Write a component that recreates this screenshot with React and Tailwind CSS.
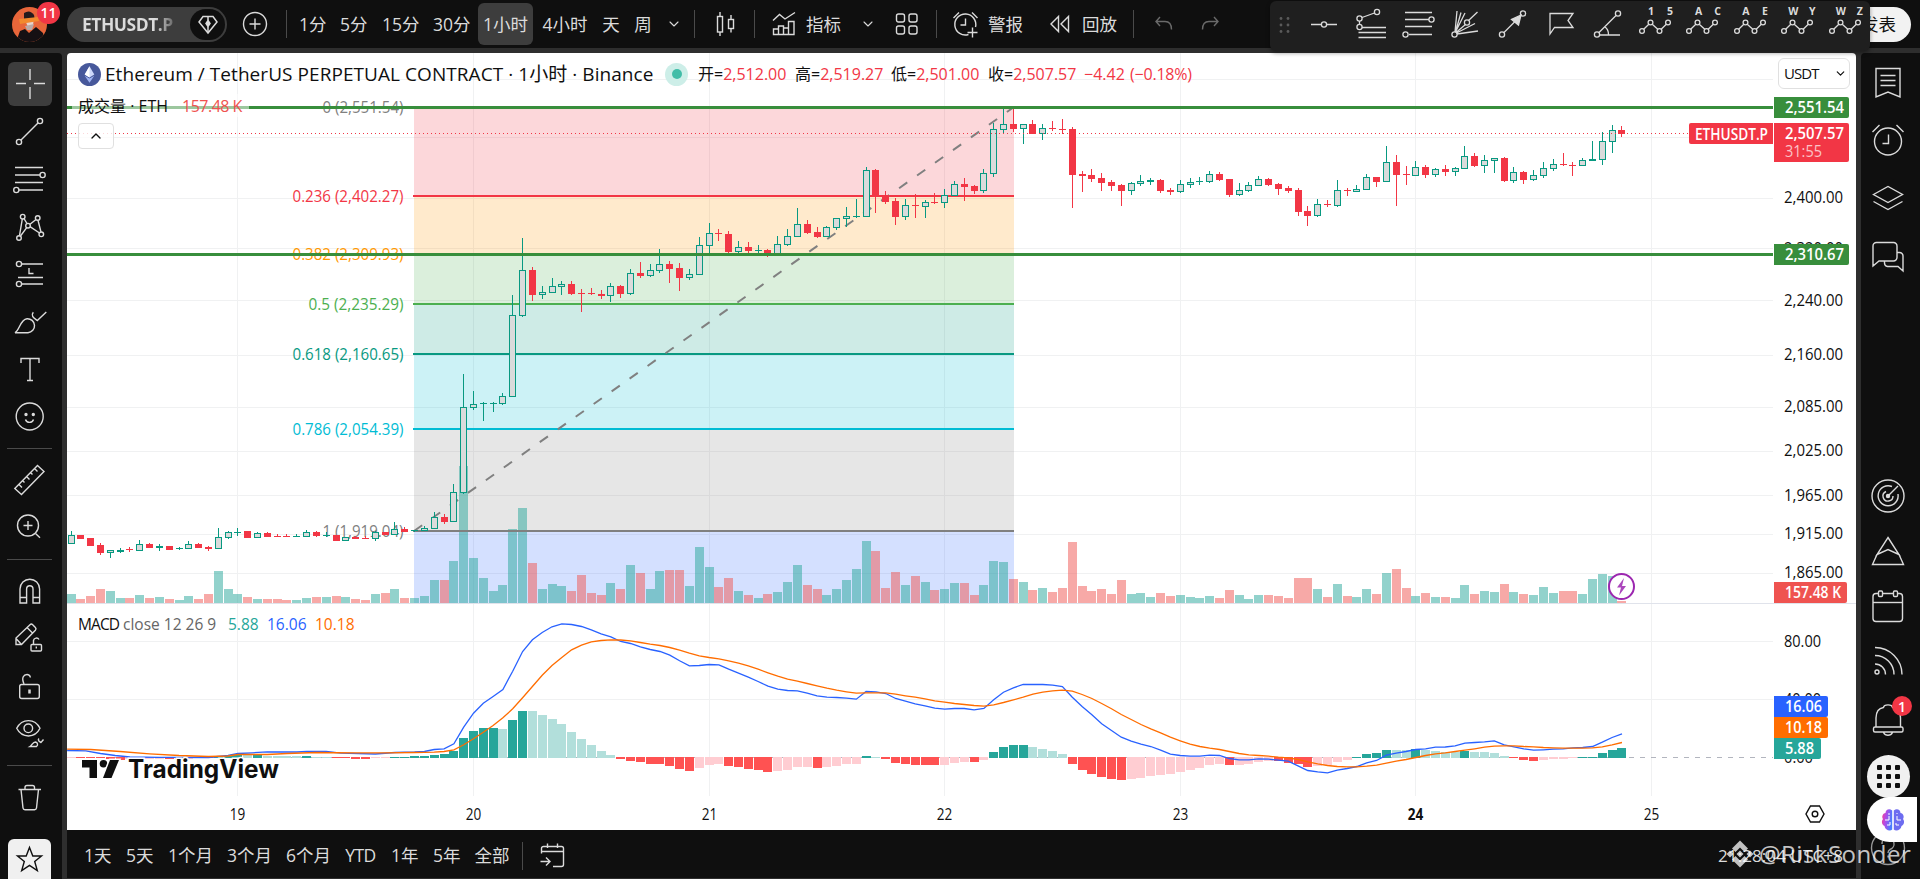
import { ChevronDown, ChevronUp } from 'lucide-react';

// one row per hour: [up, high, bodyTop, bodyBottom, low, volume]
const BARS = [
  [1, 531, 535, 544, 544, 9], [0, 535, 535, 539, 539, 4], [0, 538, 538, 546, 546, 7], [0, 543, 545, 553, 555, 14],
  [1, 550, 550, 553, 558, 12], [1, 548, 550, 552, 553, 5], [0, 547, 549, 550, 552, 5], [1, 540, 544, 551, 551, 8],
  [0, 543, 544, 548, 548, 5], [1, 544, 546, 548, 551, 6], [0, 546, 546, 550, 550, 4], [1, 547, 548, 549, 550, 3],
  [1, 541, 544, 549, 549, 7], [0, 543, 544, 548, 548, 4], [0, 546, 547, 549, 551, 9], [1, 528, 537, 549, 549, 32],
  [1, 531, 532, 538, 539, 14], [1, 528, 532, 533, 536, 9], [0, 531, 531, 538, 538, 6], [1, 532, 533, 538, 538, 4],
  [0, 532, 533, 537, 537, 4], [0, 534, 536, 537, 537, 4], [0, 534, 536, 537, 537, 3], [1, 534, 536, 537, 537, 3],
  [1, 530, 532, 537, 537, 5], [0, 531, 532, 536, 537, 6], [1, 532, 535, 536, 537, 6], [0, 535, 535, 541, 541, 7],
  [1, 537, 537, 541, 541, 6], [0, 536, 537, 539, 539, 4], [0, 536, 538, 539, 539, 3], [1, 531, 532, 539, 541, 9],
  [0, 532, 532, 535, 535, 10], [1, 522, 529, 535, 535, 14], [0, 527, 529, 532, 532, 5], [1, 530, 530, 531, 532, 5],
  [1, 526, 528, 531, 531, 7], [1, 512, 517, 529, 529, 23], [0, 514, 517, 522, 524, 23], [1, 484, 492, 522, 522, 42],
  [1, 374, 407, 493, 494, 137], [1, 391, 404, 408, 410, 45], [1, 402, 403, 404, 421, 25], [1, 402, 403, 404, 412, 12],
  [1, 393, 396, 404, 405, 18], [1, 295, 315, 397, 397, 74], [1, 238, 270, 316, 317, 95], [0, 267, 270, 295, 301, 40],
  [1, 286, 292, 295, 299, 14], [1, 278, 286, 293, 293, 19], [1, 281, 284, 287, 295, 17], [0, 281, 284, 294, 295, 12],
  [0, 289, 293, 294, 312, 28], [0, 288, 293, 294, 295, 10], [0, 290, 294, 296, 299, 8], [1, 283, 286, 296, 302, 20],
  [0, 285, 286, 294, 298, 14], [1, 269, 273, 294, 295, 38], [0, 262, 273, 276, 278, 30], [1, 264, 270, 276, 277, 14],
  [1, 249, 264, 271, 273, 32], [0, 261, 264, 269, 283, 33], [0, 263, 268, 278, 291, 33], [1, 269, 274, 278, 280, 17],
  [1, 237, 245, 275, 275, 56], [1, 223, 233, 246, 254, 36], [0, 229, 233, 234, 241, 16], [0, 231, 234, 252, 255, 25],
  [1, 241, 247, 252, 253, 12], [0, 242, 247, 251, 253, 8], [1, 245, 250, 251, 253, 5], [0, 249, 250, 254, 257, 9],
  [1, 236, 244, 254, 254, 11], [1, 229, 236, 245, 246, 21], [1, 208, 224, 237, 237, 38], [0, 220, 224, 233, 234, 18],
  [0, 227, 232, 237, 238, 14], [1, 226, 227, 237, 237, 8], [1, 218, 218, 228, 230, 14], [1, 207, 216, 219, 227, 23],
  [1, 199, 216, 217, 218, 34], [1, 167, 170, 217, 217, 62], [0, 169, 170, 196, 213, 52], [0, 191, 195, 202, 204, 15],
  [0, 198, 201, 217, 225, 31], [1, 199, 205, 217, 220, 18], [0, 194, 205, 206, 218, 27], [1, 200, 202, 207, 218, 21],
  [0, 193, 202, 203, 204, 13], [1, 189, 195, 203, 208, 14], [1, 181, 184, 196, 196, 20], [0, 178, 184, 187, 201, 20],
  [0, 185, 186, 191, 194, 8], [1, 169, 173, 191, 193, 18], [1, 123, 129, 174, 177, 42], [1, 109, 124, 130, 133, 41],
  [0, 109, 124, 129, 132, 24], [1, 124, 124, 129, 144, 21], [0, 120, 124, 134, 134, 13], [1, 124, 128, 134, 140, 15],
  [0, 121, 128, 129, 131, 11], [0, 119, 129, 130, 134, 15], [0, 127, 129, 175, 208, 61], [0, 171, 174, 176, 192, 17],
  [0, 169, 175, 179, 182, 12], [0, 173, 178, 183, 191, 14], [0, 180, 182, 186, 191, 9], [0, 184, 185, 191, 206, 23],
  [1, 182, 183, 191, 195, 9], [1, 175, 181, 184, 186, 10], [1, 178, 180, 182, 185, 6], [0, 179, 180, 191, 193, 10],
  [0, 188, 190, 192, 195, 7], [1, 180, 184, 192, 193, 8], [1, 178, 182, 185, 188, 6], [1, 177, 181, 182, 185, 5],
  [1, 171, 174, 182, 183, 7], [0, 172, 174, 180, 181, 5], [0, 179, 179, 195, 197, 13], [1, 183, 190, 195, 196, 8],
  [1, 182, 185, 191, 192, 4], [1, 176, 179, 186, 186, 8], [0, 178, 179, 185, 186, 8], [0, 183, 184, 189, 195, 7],
  [0, 186, 188, 191, 193, 5], [0, 188, 190, 212, 216, 25], [0, 206, 211, 216, 226, 25], [1, 199, 204, 216, 217, 14],
  [0, 200, 204, 205, 207, 6], [1, 180, 190, 206, 207, 19], [0, 188, 190, 191, 196, 7], [1, 185, 189, 192, 192, 6],
  [1, 174, 177, 190, 190, 14], [0, 177, 177, 182, 187, 9], [1, 146, 162, 182, 182, 30], [0, 155, 162, 175, 206, 34],
  [0, 166, 174, 175, 185, 15], [1, 161, 167, 176, 176, 7], [0, 165, 167, 175, 178, 10], [1, 168, 169, 175, 177, 6],
  [0, 165, 169, 172, 176, 6], [1, 167, 168, 172, 176, 5], [1, 146, 156, 169, 169, 18], [0, 153, 156, 166, 167, 9],
  [1, 155, 160, 166, 173, 12], [1, 158, 158, 161, 173, 11], [0, 157, 158, 181, 182, 19], [1, 167, 172, 181, 183, 11],
  [0, 171, 172, 180, 184, 9], [1, 170, 175, 180, 181, 8], [1, 162, 168, 176, 178, 16], [1, 159, 164, 169, 171, 10],
  [0, 153, 164, 165, 166, 12], [0, 162, 165, 166, 176, 12], [1, 158, 160, 166, 166, 9], [1, 141, 159, 161, 161, 24],
  [1, 132, 141, 160, 165, 29], [1, 125, 130, 142, 153, 27], [0, 126, 130, 134, 137, 2],
];

const HIST = [
  -0.3, -0.6, -1, -1.3, -1.6, -2.5, -2.3, -2.2, -2, -1.8, -2, -1.8, -1.5, -1, -1.2, 1.5, 2,
  3, 2.8, 3, 2.4, 2.2, 1.8, 1.7, 1.8, 1.4, 0.8, -0.6, -1.4, -1.5, -1.6, -0.6, -0.4, 0.7,
  1.4, 1.5, 1.6, 2.6, 4, 7, 20, 27, 29.9, 30, 29, 38, 47, 46.9, 43, 39, 34, 26, 19, 13, 7, 3,
  -1.5, -4, -5, -6.7, -6.8, -9, -12, -14, -11, -8, -7, -9, -10, -12, -13, -15, -14, -13, -10, -9.9, -11, -10, -9, -7, -6.9,
  1.5, 1, -1.5, -6, -7, -8, -8.1, -8.2, -8, -6, -5, -5.1, -2.5, 5.5, 10.5, 12.5, 12.6, 10.5, 8.5, 6.5, 3.5,
  -7, -13, -17, -20, -22, -23, -22, -21, -19, -18, -17, -15, -13, -11, -8, -7, -8, -7.9, -7, -5, -3.5, -4, -6, -7, -10,
  -9, -8, -5, -3, 0.7, 3.5, 4.5, 8.3, 8.2, 7.5, 8.5, 7.5, 6.5, 6.4, 6.3, 6.6, 5.6, 5.5, 5.4, 1.5,
  -0.6, -2.5, -3.5, -2.5, -1.7, -1.5, -0.6, 1.3, 1.4, 4.5, 7.5, 9.5,
];

const FLAT_MACD = [[-17.4, 750], [-15.5, 750.3], [-14, 753], [-12.5, 755], [-11, 756.5], [-8, 756.8], [-3, 757], [-1, 755], [0, 753], [1.5, 752.3], [3, 751.3], [6, 751.5], [7, 750.8], [9, 751], [10.5, 752.7], [14, 753.5], [16, 752], [18, 751.5], [19, 751]];
const MACD = [
  749, 748.3, 743.3, 726.7, 712.7, 702.7, 696, 689, 670.7, 651, 639.3, 632, 626.3, 623.4, 624, 626, 629.3, 633.3, 636.3,
  641, 643, 646.3, 649, 651, 654.7, 660.3, 665.3, 665, 664, 664.3, 668.7, 672.7, 676.7, 681, 685.7, 688.7, 690, 690.3,
  692.7, 695.3, 696.7, 697, 697.7, 698.7, 691, 691.3, 693, 698, 700.7, 703.3, 705.3, 707.7, 708.7, 708, 708, 709.3, 708,
  699.3, 691.7, 687.3, 684, 684, 684, 684.7, 686, 696.7, 706, 714.3, 723.3, 730, 736.7, 740.7, 743.7, 746, 749.7, 753.7,
  755, 755.7, 755.7, 754.7, 755, 758, 759.3, 759.3, 758.3, 758.7, 759.7, 760.7, 765.3, 770, 771.3, 772.3, 769.7, 768, 766,
  762.3, 760, 754.7, 752.7, 751, 749, 748.3, 746.7, 746.5, 745.3, 742.7, 742, 741.3, 740.3, 744.3, 746.3, 748.3, 749.7,
  749.3, 748.7, 748.3, 747.3, 747, 746, 741.7, 737, 733.3,
];
const FLAT_SIGNAL = [[-17.4, 748.7], [-15, 749], [-12, 751], [-9, 753.3], [-6, 755], [-3, 756], [-1, 755.5], [0, 754], [3, 754], [5, 753], [8, 752], [12, 752.3], [15, 752.3], [18, 752]];
const SIGNAL = [
  751.7, 751, 749.3, 744.3, 738.3, 731.7, 725, 717.3, 708.3, 697.3, 686, 674.7, 665, 657, 649.3, 644.7, 641.3, 640, 639.3,
  639.5, 640.3, 642, 643.7, 645, 647, 649.7, 652.7, 655.3, 657, 658.3, 660.3, 662.7, 665.3, 668.7, 672.3, 675.7, 678.7,
  680.7, 683, 685.3, 687.7, 689.7, 691.3, 692.7, 692.3, 692.3, 692.3, 693.7, 695.3, 696.7, 698.3, 700.3, 701.7, 703, 704,
  705, 705.7, 704.3, 702, 699.3, 696.7, 693.7, 691.7, 690.3, 689.7, 690.7, 694, 698, 703, 708.3, 714, 719, 724, 728.3,
  732.3, 736.7, 740.3, 743.7, 746, 747.7, 749, 751, 753, 754.3, 755, 755.7, 756.7, 757.3, 759, 761.3, 763.3, 765, 766,
  766.3, 766.3, 765.7, 764.7, 762.7, 760.7, 759, 757, 755, 753.3, 752.3, 751, 749.7, 748.3, 746.7, 745.7, 745.3, 745.3,
  746, 746.3, 747, 747.3, 747.7, 747.7, 747.7, 747.3, 746.3, 744.3, 742,
];

const barX = (i) => 237.4 + 9.816 * i;
const FIRST = -17;
const toPoints = (flat, rest) =>
  [...flat, ...rest.map((y, k) => [k + 20, y])].map(([i, y]) => `${(barX(i) + 0.5).toFixed(1)},${y + 0.5}`).join(' ');

const UP = '#089981';
const DOWN = '#f23645';
const FONT = '"Open Sans", "Noto Sans CJK SC", sans-serif';

const GRID_Y = [79, 137, 198, 248, 300, 355, 407, 451, 495, 534, 573, 641, 699];
const DAYS = [[237, '19'], [473, '20'], [709, '21'], [944, '22'], [1180, '23'], [1415, '24'], [1651, '25']];
const PRICES = [
  [197, '2,400.00'], [248, '2,320.00'], [300, '2,240.00'], [354, '2,160.00'], [406, '2,085.00'],
  [450, '2,025.00'], [495, '1,965.00'], [533, '1,915.00'], [572, '1,865.00'],
];
const FIB = [
  { y: 107, to: 196, label: '0 (2,551.54)', w: 81, color: '#808080', fill: '#f23645' },
  { y: 196, to: 254, label: '0.236 (2,402.27)', w: 111, color: '#f23645', fill: '#ff9800' },
  { y: 254, to: 304, label: '0.382 (2,309.93)', w: 111, color: '#ff9800', fill: '#4caf50' },
  { y: 304, to: 354, label: '0.5 (2,235.29)', w: 95, color: '#4caf50', fill: '#089981' },
  { y: 354, to: 429, label: '0.618 (2,160.65)', w: 111, color: '#089981', fill: '#00bcd4' },
  { y: 429, to: 531, label: '0.786 (2,054.39)', w: 111, color: '#00bcd4', fill: '#808080' },
  { y: 531, to: 603, label: '1 (1,919.04)', w: 81, color: '#808080', fill: '#2962ff' },
];

function T({ x, y, w, size = 16, children, ...rest }) {
  return (
    <text x={x} y={y} fontSize={size} textLength={w} lengthAdjust="spacingAndGlyphs" fill="#0f0f0f" {...rest}>
      {children}
    </text>
  );
}

function Tag({ y, h = 21, right, color, w, children }) {
  return (
    <g>
      <path d={`M1774 ${y}H${right - 2}a2 2 0 0 1 2 2V${y + h - 2}a2 2 0 0 1-2 2H1774Z`} fill={color} />
      <T x={1785} y={y + 16} w={w} fill="#fff" fontWeight="600">{children}</T>
    </g>
  );
}

function Chart() {
  return (
    <svg width="1789" height="777" viewBox="67 53 1789 777" fontFamily={FONT} className="block">
      <g fill="#f0f1f2">
        {DAYS.map(([x]) => <rect key={x} x={x} y="53" width="1" height="743" />)}
        {GRID_Y.map((y) => <rect key={y} x="67" y={y} width="1706" height="1" />)}
      </g>
      <rect x="67" y="603" width="1789" height="1" fill="#e0e3eb" />

      {FIB.map((f) => <rect key={f.y} x="414" y={f.y} width="600" height={f.to - f.y} fill={f.fill} opacity="0.2" />)}

      {BARS.map((b, k) => (
        <rect key={k} x={Math.round(barX(k + FIRST)) - 4} y={603 - b[5]} width="9" height={b[5]}
          fill={b[0] ? '#26a69a' : '#ef5350'} opacity="0.5" />
      ))}

      {FIB.map((f) => (
        <g key={f.y}>
          {f.y !== 254 && <rect x="413" y={f.y - 1} width="601" height="2" fill={f.color} />}
          <T x={403.5} y={f.y + 5.5} w={f.w} textAnchor="end" fill={f.color}>{f.label}</T>
        </g>
      ))}
      <path d="M414 531L1014 107" stroke="#808080" strokeWidth="2" strokeDasharray="10 12" />

      {BARS.map(([up, hi, top, bot, lo], k) => {
        const x = Math.round(barX(k + FIRST));
        const c = up ? UP : DOWN;
        return (
          <g key={k}>
            <rect x={x} y={hi} width="1" height={lo - hi} fill={c} />
            <rect x={x - 3} y={top} width="7" height={bot - top} fill={c} />
            {up && bot - top > 2 ? <rect x={x - 2} y={top + 1} width="5" height={bot - top - 2} fill="#dadbdb" /> : null}
          </g>
        );
      })}

      <rect x="67" y="106" width="1706" height="3" fill="#388e3c" />
      <rect x="67" y="253" width="1706" height="3" fill="#388e3c" />
      <path d="M67 133.5H1690" stroke={DOWN} strokeDasharray="1 3" />

      {/* macd pane */}
      <path d="M67 757.5H1773" stroke="#b2b5be" strokeDasharray="5 6" />
      {HIST.map((v, k) => {
        const rising = k === 0 || v > HIST[k - 1];
        const fill = v >= 0 ? (rising ? '#26a69a' : '#b2dfdb') : (rising ? '#ffcdd2' : '#ff5252');
        const h = Math.max(1, Math.round(Math.abs(v)));
        return <rect key={k} x={Math.round(barX(k + FIRST)) - 4} y={v >= 0 ? 758 - h : 757} width="9" height={h} fill={fill} />;
      })}
      <polyline points={toPoints(FLAT_MACD, MACD)} fill="none" stroke="#2962ff" strokeWidth="1.3" />
      <polyline points={toPoints(FLAT_SIGNAL, SIGNAL)} fill="none" stroke="#ff6d00" strokeWidth="1.3" />

      <g>
        <circle cx="1621.5" cy="586.500" r="12.5" fill="#fff" stroke="#9c27b0" strokeWidth="2" />
        <path d="M1624 578l-7 9.500h4l-2 8 7-9.500h-4z" fill="#ab47bc" />
      </g>

      {/* TradingView mark */}
      <g fill="#0f0f0f" stroke="#fff" strokeWidth="3" paintOrder="stroke">
        <path d="M82 760H97V778H89.500V767.500H82Z" />
        <circle cx="103.500" cy="763.800" r="3.800" />
        <path d="M110 760H119L111.500 778H103Z" />
        <T x={128} y={778} w={151} size={25} fontWeight="700" fontFamily="Inter, sans-serif">TradingView</T>
      </g>

      {/* price scale */}
      {PRICES.map(([y, t]) => <T key={t} x={1784} y={y + 5.5} w={59}>{t}</T>)}
      <T x={1784} y={646.5} w={37}>80.00</T>
      <T x={1784} y={705} w={37}>40.00</T>
      <T x={1784} y={763} w={29}>0.00</T>
      <Tag y={97} right={1849} color="#388e3c" w={59}>2,551.54</Tag>
      <Tag y={123} h={39} right={1849} color={DOWN} w={59}>2,507.57</Tag>
      <T x={1785} y={156.5} w={37} fill="#fbc3c7">31:55</T>
      <path d="M1773 123H1691a2 2 0 0 0-2 2V142a2 2 0 0 0 2 2H1773Z" fill={DOWN} />
      <T x={1695} y={139.5} w={73} fill="#fff" fontWeight="600">ETHUSDT.P</T>
      <Tag y={244} right={1849} color="#388e3c" w={59}>2,310.67</Tag>
      <Tag y={582} right={1847} color="#ef5350" w={56}>157.48 K</Tag>
      <Tag y={696} right={1828} color="#2962ff" w={37}>16.06</Tag>
      <Tag y={717} right={1828} color="#ff6d00" w={37}>10.18</Tag>
      <Tag y={738} right={1821} color="#26a69a" w={29}>5.88</Tag>

      {/* time scale */}
      {DAYS.map(([x, t]) => (
        <T key={t} x={x + 0.5} y={819.5} w={15.5} textAnchor="middle" fontWeight={t === '24' ? 700 : 400}>{t}</T>
      ))}
      <path d="M1810.500 806H1819.500L1824 814L1819.500 822H1810.500L1806 814Z" fill="none" stroke="#0f0f0f" strokeWidth="1.400" />
      <circle cx="1815" cy="814" r="2.800" fill="none" stroke="#0f0f0f" strokeWidth="1.400" />
    </svg>
  );
}

function Icon({ w = 44, h = 44, sw = 1.4, className = '', children }) {
  return (
    <svg width={w} height={h} viewBox={`0 0 ${w} ${h}`} fill="none" stroke="currentColor" strokeWidth={sw} className={`shrink-0 ${className}`}>
      {children}
    </svg>
  );
}

const Dot = ({ x, y, r = 2.6 }) => <circle cx={x} cy={y} r={r} />;

const DRAW_TOOLS = [
  <><path d="M22 7v11M22 25v12M8 21.500h10M26 21.500h11" /></>,
  <><Dot x={11} y={32} /><Dot x={32} y={11} /><path d="M13 30L30 13" /></>,
  <><path d="M7 10.500H35M7 18H32M7 25.500H35M11 33H35" /><Dot x={34.6} y={18} /><Dot x={8.300} y={33} /></>,
  <><Dot x={14.7} y={11.7} r={2.3} /><Dot x={29.7} y={13} r={2.3} /><Dot x={20} y={20.700} r={2.3} /><Dot x={11} y={33} r={2.3} /><Dot x={33.3} y={29.3} r={2.3} />
    <path d="M14.300 14L11.500 30.700M16 13.700L19 18.500M22 19.300L28 14.500M30 15.300L33 27M12.500 31L18.700 22.700M22 21.700L31.500 28" /></>,
  <><Dot x={11} y={12} /><Dot x={11} y={32} /><path d="M13.600 12H35M13.600 32H35M10 25.500H35M21 16v5.500h4.500" /></>,
  <><path d="M7 32.700C12 30 12 19.500 19 18.700A6.500 6.500 0 0 1 20 32.700ZM25.300 12.300C22 16.500 27 18.500 29.300 20.500L38.300 12" /></>,
  <><path d="M13 16V11.500H31V16M22 11.500V33.500M19 33.500H25" /></>,
  <><circle cx="21.700" cy="21.500" r="13.500" /><circle cx="18" cy="19.500" r="1" fill="currentColor" /><circle cx="25.300" cy="19.500" r="1" fill="currentColor" /><path d="M17.500 24.500a4.200 4.200 0 0 0 8 0" /></>,
];

const MEASURE_TOOLS = [
  <><path d="M29.500 7.500L36 13.500L13.500 36.500L6.800 30.500ZM26.500 10.500l3 3M22.500 14.500l2 2M18.500 18.500l3 3M14.500 22.500l2 2M11 26.500l3 3" /></>,
  <><circle cx="20" cy="21.500" r="10.500" /><path d="M27.500 29.500L32 33.700M20 17v9M15.500 21.500h9" /></>,
];

const LOCK_TOOLS = [
  <><path d="M12 34V20a9.800 9.800 0 0 1 19.600 0V34H25V20a3.200 3.200 0 0 0-6.400 0V34ZM12 28.500h6.500M25 28.500h6.500" /></>,
  <><path d="M8 28.500V22L22 8.700a2 2 0 0 1 2.700 0l2.700 2.800a2 2 0 0 1 0 2.700L13.500 28.500ZM19 11.500l5.500 5.500M8 22.500l5.500 6" />
    <rect x="23" y="28.500" width="10.500" height="6.500" rx="1" /><path d="M25.500 28V24.500a3 3 0 0 1 5.500-1M28.300 30.500v2" /></>,
  <><rect x="11.700" y="20.500" width="19.600" height="14" rx="2" /><path d="M16 20C13 13.500 16 10.500 19 10.500S22 12.500 22.500 13.500" /><path d="M21.500 25.500v4" strokeWidth="2.500" /></>,
  <><path d="M8.700 17.300C14 7 27 7 32 17.300C27 27.500 14 27.500 8.700 17.300Z" /><circle cx="20.300" cy="17.300" r="4.300" /><path d="M22 35.500C24.500 34 24.500 31 27.500 31A2.500 2.500 0 0 1 28.500 35.500ZM31 27.500C29 29.500 32 31 33 31.500L35.500 28.500" /></>,
];

const RIGHT_TOP = [
  <><path d="M10 7.500H34V36L22 31L10 36ZM14.500 14.500h15M14.500 19.500h15M14.500 24.500h15" /></>,
  <><circle cx="22" cy="22.500" r="13.500" /><path d="M22.500 15.500V24.500H16.500M6.500 13L13.500 6M37.500 13L30.500 6" /></>,
  <><path d="M7.500 17.500L22 9.500L36.500 17.500L22 25.500ZM7.500 24.500L22 32.500L36.500 24.500" /></>,
  <><path d="M7 31V11a3.500 3.500 0 0 1 3.500-3.500H27.500A3.500 3.500 0 0 1 31 11V22.500A3.500 3.500 0 0 1 27.500 26H13ZM31 17.500h2.500a3.500 3.500 0 0 1 3.500 3.500V36L32 31.500H21.500A3.500 3.500 0 0 1 18.500 28V26" /></>,
];

const RIGHT_BOTTOM = [
  <><circle cx="22" cy="22" r="16" /><path d="M22 22L32 12M26 12.500a10 10 0 1 0 6 7.500M20 17.500a5 5 0 1 0 7 4.500" /><circle cx="22" cy="22" r="1.500" fill="currentColor" /></>,
  <><path d="M22 8.500L33 25.500L22 20.500L11 25.500ZM11 25.500L6.500 35.500H37.500L33 25.500" /></>,
  <><rect x="7" y="9.500" width="29.500" height="28" rx="3" /><path d="M7 18.500H36.500" /><rect x="12.500" y="7" width="4" height="5.500" rx="1" fill="#0f0f0f" /><rect x="27.500" y="7" width="4" height="5.500" rx="1" fill="#0f0f0f" /></>,
  <><circle cx="11" cy="33" r="2" /><path d="M9 25a10.500 10.500 0 0 1 10.500 10.500M9 16.500a19 19 0 0 1 19 19M9 8.500a27 27 0 0 1 27 27" /></>,
];

function ToolCell({ children }) {
  return <button className="flex h-11 w-11 items-center justify-center">{children}</button>;
}

function Wave({ a, b }) {
  return (
    <div className="relative flex h-full w-[47.45px] justify-center">
      <Icon w={44} h={48} sw={1.3}>
        <Dot x={8} y={30} r={2.4} /><Dot x={16.500} y={21.500} r={2.4} /><Dot x={25.500} y={30} r={2.4} /><Dot x={34} y={21.500} r={2.4} />
        <path d="M9.700 28.300L14.800 23.200M18.200 23.200L23.800 28.300M27.200 28.300L32.300 23.200" />
      </Icon>
      <span className="absolute left-[13px] top-[3px] w-3 text-center text-[10.500px] font-bold">{a}</span>
      <span className="absolute left-[32px] top-[3px] w-3 text-center text-[10.500px] font-bold">{b}</span>
    </div>
  );
}

const FAVORITES = [
  <><path d="M9 23.500h10M25 23.500h10" /><Dot x={22} y={23.500} /></>,
  <><Dot x={10.500} y={17.500} /><Dot x={28} y={11} /><Dot x={10.500} y={26} /><path d="M13 16.500L25.500 12M10.500 20.100V23.500M13 26.500H37M9.500 31.500H37M9.500 36.500H37" /></>,
  <><path d="M8 11.500H35M8 18.500H32M8 25.500H35M12 33.500H35" /><Dot x={34.500} y={18.500} /><Dot x={8.500} y={33.500} /></>,
  <><Dot x={10.500} y={33.500} /><Dot x={23} y={21.500} /><path d="M11 31L13 10M11.500 31L21 12M12 31.500L21.500 23.500M24.500 19.500L33.500 11M12.500 32L31 22.500M13 33L34 30M11.500 31L17 11.500" /></>,
  <><Dot x={11} y={33.500} /><Dot x={32} y={12.500} /><path d="M13 31.500L24 20.500" /><path d="M30 14L20.500 18.500L27.500 24Z" fill="currentColor" /></>,
  <><path d="M11 33V12.500H34L29 19.500L34 26.500H15.500Z" /></>,
  <><Dot x={11} y={33.500} /><Dot x={32} y={12.500} /><path d="M13 31.500L30 14.500M14 34H34M19 26Q22.500 28.500 22.500 33.500" /></>,
];

const CN = 'whitespace-nowrap text-center text-[17.500px]';

function TopBar() {
  return (
    <header className="relative flex h-12 w-full items-center bg-[#0f0f0f] text-[#dbdbdb]">
      <div className="relative ml-[12px] h-[35px] w-[35px] shrink-0">
        <svg width="35" height="35" viewBox="0 0 35 35">
          <defs><clipPath id="avatar"><circle cx="17.500" cy="17.500" r="17.500" /></clipPath></defs>
          <g clipPath="url(#avatar)">
            <rect width="35" height="35" fill="#e8663a" />
            <path d="M12 6Q18 2 22 8L23 14H12Z" fill="#251b1d" />
            <path d="M4 35L8 24L13 22L17 26L24 20L31 26L33 35Z" fill="#151013" />
            <path d="M13 13L22 11L21 18L16 20Z" fill="#e9d5cb" />
            <path d="M7 12L26 10L27 14L8 17Z" fill="#f28a2e" />
            <path d="M13 19L22 17L20 23H15Z" fill="#b9a9a6" />
          </g>
        </svg>
        <span className="absolute -top-[5px] left-[25px] flex h-[22px] w-[23px] items-center justify-center rounded-full bg-[#f23645] text-[14px] font-semibold text-white">11</span>
      </div>
      <div className="ml-5 flex h-[35px] w-[160px] shrink-0 items-center justify-between rounded-full bg-[#3d3d3d] pl-[15px] pr-0.5">
        <span className="bg-linear-to-r from-[#dbdbdb] from-80% to-[#6d6d6d] bg-clip-text text-[17.500px] font-bold tracking-[-0.500px] text-transparent">ETHUSDT.P</span>
        <span className="flex h-[31px] w-[35px] items-center justify-center rounded-full bg-[#0f0f0f]">
          <Icon w={24} h={24} sw={1.5}><path d="M7 4.500H17L21 10L12 21L3 10Z" /><path d="M12 5v3.500M12 14.500V20" /><path d="M12 8.500l2 3-2 3-2-3z" fill="currentColor" /></Icon>
        </span>
      </div>
      <Icon w={28} h={28} className="ml-[14px]"><circle cx="14" cy="14" r="11.500" /><path d="M14 8.500v11M8.500 14h11" /></Icon>
      <i className="ml-[17px] h-7 w-px bg-[#4a4a4a]" />
      <div className="ml-[12px] flex items-center">
        <span className={`w-[27px] ${CN}`}>1分</span>
        <span className={`ml-[14px] w-[27px] ${CN}`}>5分</span>
        <span className={`ml-[15px] w-[36px] ${CN}`}>15分</span>
        <span className={`ml-[15px] w-[36px] ${CN}`}>30分</span>
        <span className={`ml-[9px] flex h-[42px] w-[55px] items-center justify-center rounded-md bg-[#3d3d3d] ${CN}`}>1小时</span>
        <span className={`ml-[9px] w-[46px] ${CN}`}>4小时</span>
        <span className={`ml-[14px] w-[18px] ${CN}`}>天</span>
        <span className={`ml-[14px] w-[18px] ${CN}`}>周</span>
      </div>
      <ChevronDown size={16} strokeWidth={1.6} className="ml-[14px] shrink-0" />
      <i className="ml-[12px] h-7 w-px bg-[#4a4a4a]" />
      <Icon w={24} h={28} className="ml-[19px]"><path d="M6 2v4.500M6 22v4M17 5v4.500M17 18.500v4" /><rect x="3.500" y="6.500" width="5" height="15.500" /><rect x="14.500" y="9.500" width="5" height="9" /></Icon>
      <i className="ml-[16px] h-7 w-px bg-[#4a4a4a]" />
      <Icon w={26} h={28} className="ml-[16px]"><path d="M2 10.500L8.500 4.500L14 9L24 2.500" /><path d="M2.500 24.500V19h5v5.500ZM7.500 24.500V16h5v8.500M12.500 24.500V16M17.500 24.500V11.500H23V24.500ZM12.500 18H17.500M2.500 24.500H23" /></Icon>
      <span className={`ml-[9px] w-[34px] ${CN}`}>指标</span>
      <ChevronDown size={16} strokeWidth={1.600} className="ml-[20px] shrink-0" />
      <Icon w={24} h={24} className="ml-[19px]"><rect x="1.500" y="2" width="8" height="8" rx="2" /><rect x="14" y="2" width="8" height="8" rx="2" /><rect x="1.500" y="14" width="8" height="8" rx="2" /><rect x="14" y="14" width="8" height="8" rx="2" /></Icon>
      <i className="ml-[17px] h-7 w-px bg-[#4a4a4a]" />
      <Icon w={28} h={28} className="ml-[15px]"><path d="M16.500 24.500A10.500 10.500 0 1 1 23.500 17M13.500 8.500V15H8.500M1.500 8L7 2.500M25.500 8L20 2.500M20.500 17.500v10M15.500 22.500h10" /></Icon>
      <span className={`ml-[8px] w-[35px] ${CN}`}>警报</span>
      <Icon w={22} h={24} className="ml-[26px]"><path d="M9.500 4.500V19.500L2 12ZM19.500 4.500V19.500L12 12Z" /></Icon>
      <span className={`ml-[11px] w-[35px] ${CN}`}>回放</span>
      <i className="ml-[16px] h-7 w-px bg-[#4a4a4a]" />
      <Icon w={20} h={20} className="ml-[20px] text-[#6a6a6a]"><path d="M6 3L2 7.500L6 12M2 7.500H11Q17.500 7.500 17.500 15.500" /></Icon>
      <Icon w={20} h={20} className="ml-[26px] text-[#6a6a6a]"><path d="M14 3L18 7.500L14 12M18 7.500H9Q2.500 7.500 2.500 15.500" /></Icon>
      <button className="ml-auto mr-[9px] flex h-[35px] w-[66px] items-center justify-end rounded-full bg-[#f2f2f2] pr-[15px] text-[17.500px] text-[#0f0f0f]">发表</button>

      {/* floating favourites strip */}
      <div className="absolute left-[1270px] top-[1px] z-10 flex h-[50px] w-[600px] items-center rounded-md bg-[#1f1f1f] shadow-[0_2px_4px_rgba(0,0,0,0.400)]">
        <svg width="12" height="18" viewBox="0 0 12 18" fill="#5a5a5a" className="ml-[8px] mr-[10px] shrink-0">
          {[1.500, 8, 14.500].map((y) => <g key={y}><circle cx="3" cy={y} r="1.400" /><circle cx="10" cy={y} r="1.400" /></g>)}
        </svg>
        {FAVORITES.map((d, k) => (
          <div key={k} className="flex h-full w-[47.45px] justify-center"><Icon w={44} h={48} sw={1.3}>{d}</Icon></div>
        ))}
        <Wave a="1" b="5" />
        <Wave a="A" b="C" />
        <Wave a="A" b="E" />
        <Wave a="W" b="Y" />
        <Wave a="W" b="Z" />
      </div>
    </header>
  );
}

function LeftBar() {
  return (
    <aside className="flex h-[826px] w-[62px] flex-col items-center rounded-tr bg-[#0f0f0f] pr-[3px] text-[#dbdbdb]">
      <div className="mt-[9px] flex h-[377px] flex-col justify-between">
        {DRAW_TOOLS.map((d, k) => (
          <button key={k} className={`flex h-11 w-11 items-center justify-center rounded-md ${k === 0 ? 'bg-[#3d3d3d]' : ''}`}><Icon>{d}</Icon></button>
        ))}
      </div>
      <hr className="mt-[9px] w-[45px] border-[#4a4a4a]" />
      <div className="mt-[9px] flex h-[90px] flex-col justify-between">
        {MEASURE_TOOLS.map((d, k) => <ToolCell key={k}><Icon>{d}</Icon></ToolCell>)}
      </div>
      <hr className="mt-[11px] w-[45px] border-[#4a4a4a]" />
      <div className="mt-[9px] flex h-[186px] flex-col justify-between">
        {LOCK_TOOLS.map((d, k) => <ToolCell key={k}><Icon>{d}</Icon></ToolCell>)}
      </div>
      <hr className="mt-[10px] w-[45px] border-[#4a4a4a]" />
      <div className="mt-[9px]">
        <ToolCell><Icon><path d="M10.500 14.500H33M17 14V12.500a2 2 0 0 1 2-2H24.500a2 2 0 0 1 2 2V14M13 14.500L15 33a2 2 0 0 0 2 1.700H26.500a2 2 0 0 0 2-1.700L30.500 14.500" /></Icon></ToolCell>
      </div>
      <button className="mt-[20px] flex h-[40px] w-[43px] shrink-0 justify-center rounded-t-md bg-[#f0f0f0] text-[#0f0f0f]">
        <Icon w={43} h={40}><path d="M21.500 8.500L24.800 17H33.500L26.700 22.500L29.300 31.500L21.500 26.300L13.700 31.500L16.300 22.500L9.500 17H18.200Z" /></Icon>
      </button>
    </aside>
  );
}

function RightBar() {
  return (
    <aside className="relative flex h-[826px] w-[59px] flex-col items-center rounded-tl bg-[#0f0f0f] pr-[5px] text-[#dbdbdb]">
      <div className="mt-[8px] flex h-[218px] flex-col justify-between">
        {RIGHT_TOP.map((d, k) => <ToolCell key={k}><Icon>{d}</Icon></ToolCell>)}
      </div>
      <div className="mt-[195px] flex h-[209px] flex-col justify-between">
        {RIGHT_BOTTOM.map((d, k) => <ToolCell key={k}><Icon>{d}</Icon></ToolCell>)}
      </div>
      <div className="relative mt-[15px] h-11 w-11">
        <Icon><path d="M10 29V20C10 12 14 10 17.500 9.500C18 6 26 6 26.500 9.500C30 10 34.500 12 34.500 20V29M9 29H35.500a1.500 1.500 0 0 1 1.500 1.500V32.500a1.500 1.500 0 0 1-1.500 1.500H9a1.500 1.500 0 0 1-1.500-1.500V30.500A1.500 1.500 0 0 1 9 29ZM17.500 34.500a5 5 0 0 0 9 0" /></Icon>
        <span className="absolute left-[26px] top-[-2px] flex h-5 w-5 items-center justify-center rounded-full bg-[#f23645] text-[14px] font-semibold text-white">1</span>
      </div>
      <div className="mt-[13px] flex h-[43px] w-[43px] shrink-0 items-center justify-center rounded-full bg-[#f0f0f0]">
        <div className="grid grid-cols-3 gap-[4px]">
          {Array.from({ length: 9 }, (_, k) => <i key={k} className="h-[5px] w-[5px] rounded-[1px] bg-[#0f0f0f]" />)}
        </div>
      </div>
      <Icon w={36} h={36} className="mt-[32px] text-[#9a9a9a]"><circle cx="18" cy="18" r="16.500" /><path d="M12 14a6 6 0 1 1 8 5.500Q18 20.500 18 23M18 25.500v2" /></Icon>
      {/* assistant tab overlapping the bar */}
      <div className="absolute left-[6px] top-[744px] flex h-[45px] w-[50px] items-center justify-center rounded-l-full bg-white">
        <svg width="24" height="24" viewBox="0 0 24 24" className="ml-[2px]">
          <defs>
            <linearGradient id="brain" x1="0" y1="0" x2="1" y2="0.300">
              <stop offset="0" stopColor="#ff3d8b" /><stop offset="0.450" stopColor="#b04be8" /><stop offset="1" stopColor="#4a7dff" />
            </linearGradient>
          </defs>
          <path d="M11.200 2.500C8 0 4.500 2 4.500 5C1.500 5.500 0.500 9 2 11C0 13.500 1 17 3.500 18C4 22 9 24 11.200 21.500Z" fill="url(#brain)" />
          <path d="M12.800 2.500C16 0 19.500 2 19.500 5C22.500 5.500 23.500 9 22 11C24 13.500 23 17 20.500 18C20 22 15 24 12.800 21.500Z" fill="#6d6cf0" />
          <path d="M4 12H8V8M6 17H9V14M20 12H16V8M18 17H15V15M8 5v2M16 5v1" stroke="#fff" strokeWidth="1" fill="none" />
        </svg>
      </div>
    </aside>
  );
}

const N = 'text-[#f23645]';

function Legend() {
  return (
    <>
      <div className="absolute left-[11px] top-[9px] flex h-6 items-center text-[16px] text-[#0f0f0f]">
        <svg width="23" height="23" viewBox="0 0 24 24" className="shrink-0">
          <circle cx="12" cy="12" r="12" fill="#47589b" />
          <path d="M12 3.500L17 12L12 15L7 12Z" fill="#cdd8fb" /><path d="M12 3.500V15L7 12Z" fill="#fff" />
          <path d="M17 13.200L12 20.500L7 13.200L12 16.200Z" fill="#9fb2f2" />
        </svg>
        <span className="ml-[4px] w-[560px] whitespace-nowrap text-[19px] tracking-[0.060px]">Ethereum / TetherUS PERPETUAL CONTRACT · 1小时 · Binance</span>
        <span className="flex h-[23px] w-[23px] items-center justify-center rounded-full bg-[#cdeee8]"><i className="h-[10px] w-[10px] rounded-full bg-[#42bda8]" /></span>
        <div className="ml-[10px] flex whitespace-nowrap">
          <span className="w-[97px]">开=<span className={N}>2,512.00</span></span>
          <span className="w-[96px]">高=<span className={N}>2,519.27</span></span>
          <span className="w-[97px]">低=<span className={N}>2,501.00</span></span>
          <span className="w-[96px]">收=<span className={N}>2,507.57</span></span>
          <span className={`w-[46px] ${N}`}>−4.42</span>
          <span className={`tracking-[-0.200px] ${N}`}>(−0.18%)</span>
        </div>
      </div>
      <div className="absolute left-[5px] top-[41px] flex h-[23px] w-[177px] items-center bg-white/50 pl-[6px] text-[16px]">
        <span className="w-[104px] whitespace-nowrap text-[#0f0f0f]">成交量 · ETH</span>
        <span className="tracking-[-0.500px] text-[#ef5350]">157.48 K</span>
      </div>
      <button className="absolute left-[11px] top-[70px] flex h-[26px] w-[36px] items-center justify-center rounded border border-[#e0e0e0] bg-white/80">
        <ChevronUp size={16} strokeWidth={2} className="text-[#0f0f0f]" />
      </button>
      <div className="absolute left-[11px] top-[561px] flex h-[22px] items-center whitespace-nowrap text-[15.500px]">
        <span className="w-[45px] tracking-[-0.900px] text-[#0f0f0f]">MACD</span>
        <span className="w-[105px] text-[#666]">close 12 26 9</span>
        <span className="w-[39px] text-[#26a69a]">5.88</span>
        <span className="w-[48px] text-[#2962ff]">16.06</span>
        <span className="text-[#ff6d00]">10.18</span>
      </div>
      <button className="absolute right-[6px] top-[5px] flex h-[31px] w-[72px] items-center justify-between rounded-md border border-[#e0e0e0] bg-white pl-[5px] pr-[2px] text-[15px] tracking-[-0.900px] text-[#0f0f0f]">
        USDT<ChevronDown size={13} strokeWidth={2.200} />
      </button>
    </>
  );
}

function BottomBar() {
  return (
    <footer className="flex h-[48px] items-center bg-[#0f0f0f] pl-[17px] pt-[3px] text-[#dbdbdb]">
      <span className={`w-[27px] ${CN}`}>1天</span>
      <span className={`ml-[15px] w-[27px] ${CN}`}>5天</span>
      <span className={`ml-[15px] w-[44px] ${CN}`}>1个月</span>
      <span className={`ml-[15px] w-[44px] ${CN}`}>3个月</span>
      <span className={`ml-[15px] w-[44px] ${CN}`}>6个月</span>
      <span className={`ml-[15px] w-[31px] tracking-[-0.500px] ${CN}`}>YTD</span>
      <span className={`ml-[15px] w-[27px] ${CN}`}>1年</span>
      <span className={`ml-[15px] w-[27px] ${CN}`}>5年</span>
      <span className={`ml-[14px] w-[36px] ${CN}`}>全部</span>
      <i className="ml-[12px] h-7 w-px bg-[#4a4a4a]" />
      <Icon w={28} h={28} className="ml-[16px]"><path d="M2.500 11.500V6.500a2 2 0 0 1 2-2H22.500a2 2 0 0 1 2 2V22.500a2 2 0 0 1-2 2H14M2.500 9.500H24.500M8.500 1.500V6M18.500 1.500V6M1.500 19.500H10.500M7 15.500L11 19.500L7 23.500" /></Icon>
      <span className="ml-auto mr-[13px] whitespace-nowrap text-[17px] tracking-[0.100px]">21:28:04 UTC+8</span>
    </footer>
  );
}

export default function App() {
  return (
    <div className="relative flex h-[879px] w-[1920px] flex-col overflow-hidden bg-[#2e2e2e] font-['Open_Sans','Noto_Sans_CJK_SC',sans-serif]">
      <TopBar />
      <div className="mt-[5px] flex justify-between">
        <LeftBar />
        <main className="ml-[5px] mr-[5px] w-[1789px]">
          <section className="relative h-[777px] overflow-hidden rounded-t bg-white">
            <Chart />
            <Legend />
          </section>
          <BottomBar />
        </main>
        <RightBar />
      </div>
      <div className="absolute left-[1726px] top-[836px] flex h-9 items-center whitespace-nowrap text-white/75">
        <svg width="28" height="28" viewBox="0 0 28 28" fill="currentColor">
          <path d="M14 0.500L22 8.500L18.500 12L14 7.500L9.500 12L6 8.500ZM14 27.500L22 19.500L18.500 16L14 20.500L9.500 16L6 19.500ZM0.500 14L4 10.500L7.500 14L4 17.500ZM20.500 14L24 10.500L27.500 14L24 17.500ZM14 10.500L17.500 14L14 17.500L10.500 14Z" />
        </svg>
        <span className="ml-[5px] text-[24px] tracking-[0.500px]">@RiskSonder</span>
      </div>
    </div>
  );
}
